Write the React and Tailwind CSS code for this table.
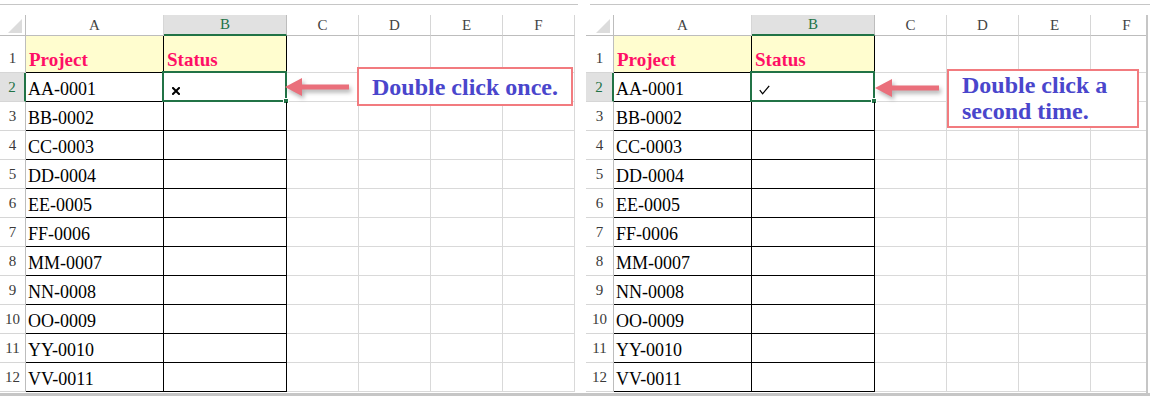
const ROWS = [
  "AA-0001",
  "BB-0002",
  "CC-0003",
  "DD-0004",
  "EE-0005",
  "FF-0006",
  "MM-0007",
  "NN-0008",
  "OO-0009",
  "YY-0010",
  "VV-0011",
];

const LETTERS = ["A", "B", "C", "D", "E", "F"];

function Cross() {
  return (
    <svg width="8" height="8" viewBox="0 0 8 8" className="absolute left-[8px] top-[14px]">
      <path d="M1 1 L7 7 M7 1 L1 7" stroke="#000" strokeWidth="2" strokeLinecap="square" />
    </svg>
  );
}

function Check() {
  return (
    <svg width="11" height="10" viewBox="0 0 11 10" className="absolute left-[7px] top-[12px]">
      <path d="M0.8 5.2 L3.6 8.8 L10.2 0.8" stroke="#000" strokeWidth="1.3" fill="none" />
    </svg>
  );
}

function Arrow({ className }) {
  return (
    <svg
      width="72"
      height="28"
      viewBox="0 0 72 28"
      className={`absolute ${className}`}
      style={{ filter: "drop-shadow(2px 3px 2px rgba(0,0,0,0.3))" }}
    >
      <path d="M2 13 L19 4 L19 22 Z" fill="#ea6f7b" />
      <rect x="18" y="10.5" width="48" height="5" fill="#ea6f7b" />
    </svg>
  );
}

function Sheet({ rowHead, mark, width }) {
  const cols = rowHead === 26
    ? "grid-cols-[26px_138px_123px_72px_72px_72px_72px]"
    : "grid-cols-[28px_138px_123px_72px_72px_72px_72px]";

  return (
    <div className={`overflow-hidden ${width}`}>
      <div className={`grid ${cols} grid-rows-[21px_37px_repeat(11,29px)]`}>
        {/* header row */}
        <div className="relative border-r border-b border-[#bdbdbd]">
          <svg width="14" height="14" viewBox="0 0 14 14" className="absolute right-[3px] bottom-[2px]">
            <path d="M14 0 L14 14 L0 14 Z" fill="#dcdcdc" />
          </svg>
        </div>
        {LETTERS.map((l) =>
          l === "B" ? (
            <div
              key={l}
              className="flex items-center justify-center bg-[#e1e1e1] border-r border-[#bdbdbd] border-b-2 border-b-[#217346] text-[15px] text-[#217346]"
            >
              {l}
            </div>
          ) : (
            <div
              key={l}
              className="flex items-center justify-center border-r border-r-[#d6d6d6] border-b border-b-[#bdbdbd] text-[15px] text-[#444]"
            >
              {l}
            </div>
          )
        )}

        {/* row 1 */}
        <div className="flex items-end justify-center pb-[6px] border-r border-r-[#bdbdbd] border-b border-b-[#d6d6d6] text-[15px] leading-none text-[#3a3a3a]">
          1
        </div>
        <div className="flex items-end pl-[3px] pb-[1px] bg-[#fffdcf] border-r border-b border-black text-[19px] leading-[22px] font-bold text-[#ff0f66]">
          Project
        </div>
        <div className="flex items-end pl-[3px] pb-[1px] bg-[#fffdcf] border-r border-b border-black text-[19px] leading-[22px] font-bold text-[#ff0f66]">
          Status
        </div>
        {[0, 1, 2, 3].map((i) => (
          <div key={i} className="border-r border-b border-[#d9d9d9]" />
        ))}

        {/* data rows */}
        {ROWS.map((code, i) => (
          <Row key={code} n={i + 2} code={code} mark={i === 0 ? mark : null} />
        ))}
      </div>
    </div>
  );
}

function Row({ n, code, mark }) {
  const sel = n === 2;
  return (
    <>
      <div
        className={`flex items-end justify-center pb-[6px] border-b border-b-[#d6d6d6] text-[15px] leading-none ${
          sel
            ? "bg-[#e1e1e1] border-r-2 border-r-[#217346] text-[#217346]"
            : "border-r border-r-[#bdbdbd] text-[#3a3a3a]"
        }`}
      >
        {n}
      </div>
      <div className="flex items-end pl-[2px] pb-[1px] border-r border-b border-black text-[18px] leading-[21px] text-black">
        {code}
      </div>
      <div className="relative border-r border-b border-black">
        {mark === "x" && <Cross />}
        {mark === "check" && <Check />}
        {sel && (
          <div className="absolute -left-[2px] -top-[2px] -right-[1px] -bottom-[1px] border-2 border-[#217346]">
            <div className="absolute -right-[4px] -bottom-[4px] w-[6px] h-[6px] bg-[#217346] border border-white" />
          </div>
        )}
      </div>
      {[0, 1, 2, 3].map((i) => (
        <div key={i} className="border-r border-b border-[#d9d9d9]" />
      ))}
    </>
  );
}

export default function App() {
  return (
    <div className="relative w-[1150px] h-[396px] bg-white overflow-hidden flex flex-col font-[family-name:Liberation_Serif,Times_New_Roman,serif]">
      {/* screenshot frame top lines */}
      <div className="h-[15px] flex pt-[4px]">
        <div className="w-[578px] h-px bg-[#c6c6c6]" />
        <div className="w-[12px]" />
        <div className="flex-1 h-px bg-[#c6c6c6]" />
      </div>

      <div className="flex flex-1">
        <Sheet rowHead={26} mark="x" width="w-[575px]" />
        <div className="w-[11px]" />
        <div className="flex">
          <Sheet rowHead={28} mark="check" width="w-[560px]" />
          <div className="w-[2px] bg-[#c6c6c6]" />
        </div>
      </div>
      <div className="h-[3px] bg-[#c6c6c6]" />

      {/* left annotation */}
      <Arrow className="left-[283px] top-[74px]" />
      <div className="absolute left-[357px] top-[67px] w-[216px] h-[39px] border-2 border-[#f27b7f] bg-white flex items-center justify-center text-[24px] leading-none font-bold text-[#4a46cc]">
        Double click once.
      </div>

      {/* right annotation */}
      <Arrow className="left-[873px] top-[75px]" />
      <div className="absolute left-[947px] top-[69px] w-[192px] h-[59px] border-2 border-[#f27b7f] bg-white pl-[13px] pt-[1px] text-[24px] leading-[26px] font-bold text-[#4a46cc]">
        Double click a
        <br />
        second time.
      </div>
    </div>
  );
}
